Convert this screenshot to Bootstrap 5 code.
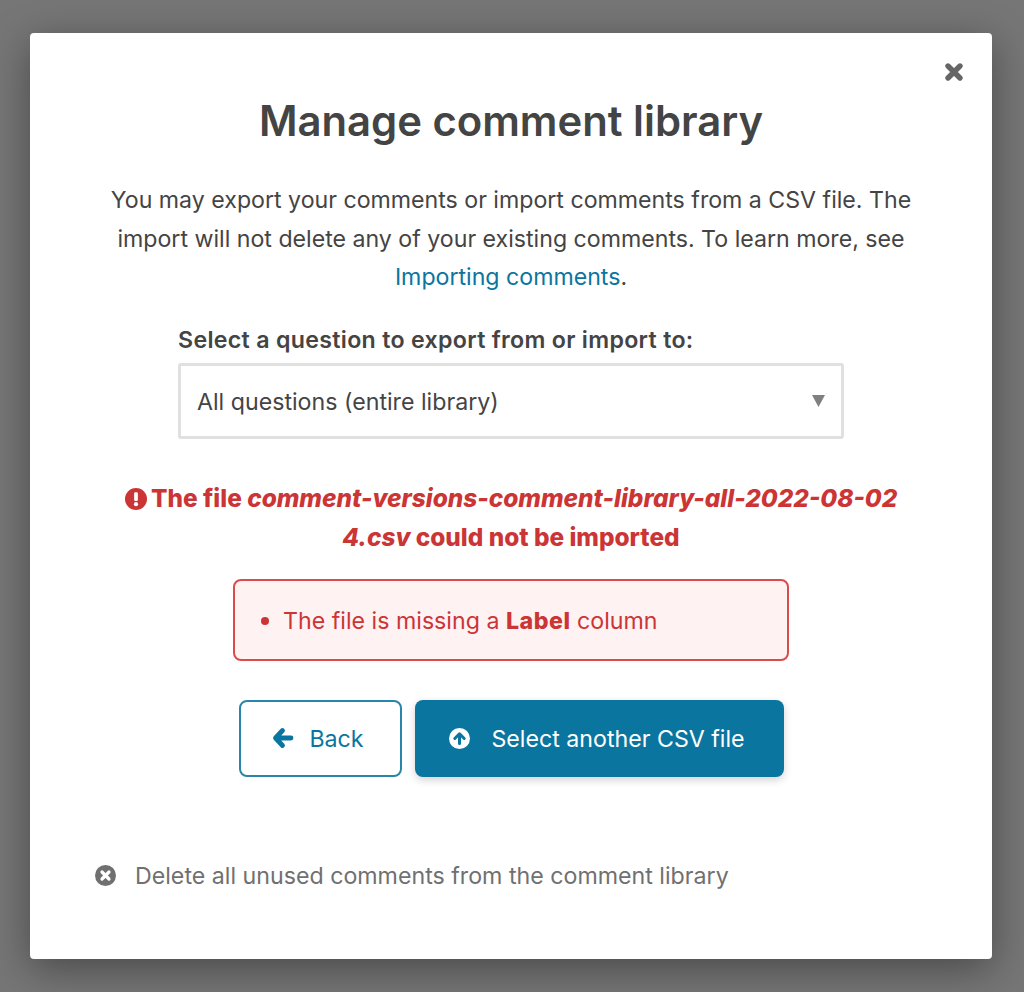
<!DOCTYPE html>
<html lang="en">
<head>
<meta charset="utf-8">
<title>Manage comment library</title>
<link href="https://cdn.jsdelivr.net/npm/bootstrap@5.3.0/dist/css/bootstrap.min.css" rel="stylesheet">
<style>
html, body { height: 100%; }
body { background: #767676; font-family: Inter, "Liberation Sans", sans-serif; font-size: 23.2px; line-height: 38.5px; color: #444; overflow: hidden; padding: 33px 32px 33px 30px; }
.sheet { width: 962px; height: 926px; background: #fff; border-radius: 4px; box-shadow: 0 10px 40px rgba(0,0,0,.38); padding: 61px 64px 0; position: relative; }
.close-x { position: absolute; top: 29px; right: 28px; width: 20px; height: 20px; line-height: 0; }
.sheet-title { font-size: 41.8px; line-height: 54px; font-weight: 600; color: #444; margin: 0 0 33px; }
.intro { width: 820px; margin: 0 auto; font-size: 23.15px; }
.intro a { color: #0a769f; text-decoration: none; }
.pick { width: 666px; margin: 24px auto 0; }
.pick-label { font-weight: 600; display: block; margin-bottom: 4px; line-height: 38px; letter-spacing: .3px; }
.pick-box { height: 76px; border: 3px solid #e0e0e0; border-radius: 3px; padding: 3px 16px 0; display: flex; align-items: center; justify-content: space-between; }
.pick-box svg { margin-top: -2px; }
.err-head { color: #cc3535; font-weight: 800; font-size: 24.4px; line-height: 39px; margin: 40px auto 0; width: 810px; }
.err-head svg { vertical-align: -3px; margin-right: -1px; }
.err-box { width: 556px; height: 82px; margin: 22px auto 0; background: #fef2f2; border: 2px solid #d94c4c; border-radius: 8px; color: #cc3535; padding: 3px 0 0 26px; display: flex; align-items: center; }
.err-box strong { font-weight: 800; letter-spacing: .5px; }
.err-dot { width: 8px; height: 8px; border-radius: 50%; background: #cc3535; margin-right: 14px; flex: none; }
.btn-row { margin-top: 39px; gap: 13px; }
.act { height: 77px; border-radius: 8px; font-size: 23.2px; display: flex; align-items: center; justify-content: center; gap: 15px; padding: 3px 4px 0 0; }
.act svg { margin-top: -3px; }
.act-back { width: 163px; border: 2px solid #2a86a9; color: #0a769f; background: #fff; }
.act-file { width: 369px; background: #0a769f; border: 0; color: #fff; gap: 21px; box-shadow: 0 3px 8px rgba(0,0,0,.18); }
.del-row { margin-top: 80px; margin-left: 1px; color: #707070; gap: 19px; }
</style>
</head>
<body>
<div class="sheet">
  <a class="close-x" href="#" aria-label="Close">
    <svg width="20" height="20" viewBox="0 0 20 20"><path d="M4 4 L16 16 M16 4 L4 16" stroke="#666" stroke-width="5.4" stroke-linecap="round"/></svg>
  </a>
  <h1 class="sheet-title text-center">Manage comment library</h1>
  <p class="intro text-center mb-0">You may export your comments or import comments from a CSV file. The import will not delete any of your existing comments. To learn more, see <a href="#">Importing comments</a>.</p>
  <div class="pick">
    <label class="pick-label">Select a question to export from or import to:</label>
    <div class="pick-box">
      <span>All questions (entire library)</span>
      <svg width="13" height="12" viewBox="0 0 13 12"><path d="M0 0H13L6.5 12Z" fill="#808080"/></svg>
    </div>
  </div>
  <p class="err-head text-center mb-0">
    <svg width="22" height="22" viewBox="0 0 21 21"><circle cx="10.5" cy="10.5" r="10.5" fill="#cc3535"/><rect x="8.7" y="4" width="3.6" height="8.5" rx="1.2" fill="#fff"/><circle cx="10.5" cy="15.4" r="2" fill="#fff"/></svg>
    The file <em>comment-versions-comment-library-all-2022-08-02</em> <em>4.csv</em> could not be imported
  </p>
  <div class="err-box"><span class="err-dot"></span><span>The file is missing a <strong>Label</strong> column</span></div>
  <div class="btn-row d-flex justify-content-center">
    <button type="button" class="btn act act-back">
      <svg width="22" height="22" viewBox="0 0 22 22"><path d="M10.5 3.5 L3.5 11 L10.5 18.5 M4 11 H19" fill="none" stroke="#0a769f" stroke-width="4.8" stroke-linecap="round" stroke-linejoin="round"/></svg>
      <span>Back</span>
    </button>
    <button type="button" class="btn act act-file">
      <svg width="21" height="21" viewBox="0 0 21 21"><circle cx="10.5" cy="10.5" r="10.5" fill="#fff"/><path d="M5.8 10.5 L10.5 5.8 L15.2 10.5 M10.5 6.5 V15.5" fill="none" stroke="#0a769f" stroke-width="3" stroke-linecap="round" stroke-linejoin="round"/></svg>
      <span>Select another CSV file</span>
    </button>
  </div>
  <div class="del-row d-flex align-items-center">
    <svg width="21" height="21" viewBox="0 0 21 21"><circle cx="10.5" cy="10.5" r="10.5" fill="#707070"/><path d="M7 7 L14 14 M14 7 L7 14" stroke="#fff" stroke-width="3.2" stroke-linecap="round"/></svg>
    <span>Delete all unused comments from the comment library</span>
  </div>
</div>
<script src="https://cdn.jsdelivr.net/npm/bootstrap@5.3.0/dist/js/bootstrap.bundle.min.js"></script>
</body>
</html>
